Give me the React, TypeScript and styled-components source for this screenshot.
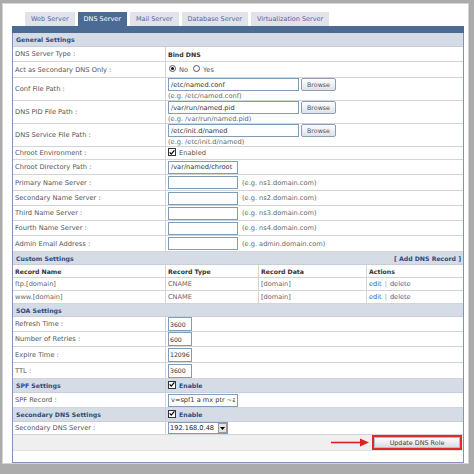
import React from "react";
import styled, { createGlobalStyle } from "styled-components";

const Global = createGlobalStyle`
  html, body { margin: 0; padding: 0; }
  body {
    background: #acacac;
    width: 474px;
    height: 474px;
    overflow: hidden;
    font-family: "DejaVu Sans", Verdana, sans-serif;
    font-size: 6.7px;
    color: #555;
  }
`;

const Frame = styled.div`
  box-sizing: border-box;
  margin: 3px 5px 0 2px;
  height: 461px;
  background: #fff;
  border: 1px solid #d4d4d4;
  padding: 8px 4px 0 9px;
`;

const Tabs = styled.div`
  display: flex;
  gap: 3px;
  padding-left: 13px;
`;

const Tab = styled.div<{ $active?: boolean }>`
  height: 14px;
  line-height: 14px;
  padding: 0 6px;
  font-size: 6.5px;
  background: ${(p) => (p.$active ? "#4b6b95" : "#e0e3e9")};
  color: ${(p) => (p.$active ? "#fff" : "#5b5fa5")};
  white-space: nowrap;
`;

const Bar = styled.div`
  height: 7px;
  background: #4b6b95;
`;

const Panel = styled.div`
  box-sizing: border-box;
  border: 1px solid #8094b5;
  border-top: none;
  height: 430px;
  padding-bottom: 12px;
`;

const SectionHeader = styled.div<{ $h: number }>`
  box-sizing: border-box;
  height: ${(p) => p.$h}px;
  display: flex;
  align-items: center;
  justify-content: space-between;
  padding: 0 2px 0 3px;
  background: #d6dce6;
  border-bottom: 1px solid #c8ced8;
  font-size: 6.2px;
  font-weight: bold;
  color: #2f4b7c;
`;

const Row = styled.div<{ $h: number; $head?: boolean }>`
  box-sizing: border-box;
  height: ${(p) => p.$h}px;
  display: grid;
  grid-template-columns: 153px 1fr;
  border-bottom: 1px solid ${(p) => (p.$head ? "#c8ced8" : "#d4d4d4")};
  background: ${(p) => (p.$head ? "#d6dce6" : "#fff")};
`;

const Label = styled.div<{ $head?: boolean }>`
  display: flex;
  align-items: center;
  padding-left: ${(p) => (p.$head ? "3px" : "2px")};
  border-right: 1px solid ${(p) => (p.$head ? "#c8ced8" : "#d4d4d4")};
  font-size: ${(p) => (p.$head ? "6.2px" : "6.7px")};
  font-weight: ${(p) => (p.$head ? "bold" : "normal")};
  color: ${(p) => (p.$head ? "#2f4b7c" : "#555")};
  white-space: nowrap;
`;

const Value = styled.div<{ $stack?: boolean }>`
  display: flex;
  flex-direction: ${(p) => (p.$stack ? "column" : "row")};
  align-items: ${(p) => (p.$stack ? "flex-start" : "center")};
  justify-content: ${(p) => (p.$stack ? "center" : "flex-start")};
  gap: ${(p) => (p.$stack ? "1px" : "4px")};
  padding-left: 2px;
  white-space: nowrap;
`;

const Line = styled.div`
  display: flex;
  align-items: center;
  gap: 2px;
`;

const Strong = styled.span<{ $blue?: boolean }>`
  font-size: 6.2px;
  font-weight: bold;
  color: ${(p) => (p.$blue ? "#2f4b7c" : "#333")};
`;

const Field = styled.input<{ $w: number; $h?: number; $pad?: number; $fs?: number }>`
  box-sizing: border-box;
  width: ${(p) => p.$w}px;
  height: ${(p) => p.$h ?? 13}px;
  border: 1px solid #7f9db9;
  padding: 0 ${(p) => p.$pad ?? 2}px;
  margin: 0;
  font-family: "DejaVu Sans", Verdana, sans-serif;
  font-size: ${(p) => p.$fs ?? 6.6}px;
  color: #333;
  background: #fff;
  outline: none;
`;

const Browse = styled.button`
  box-sizing: border-box;
  width: 35px;
  height: 13px;
  padding: 0;
  border: 1px solid #8d9db8;
  border-radius: 2px;
  background: linear-gradient(#fdfdfd, #e0e2e6);
  font-family: "DejaVu Sans", Verdana, sans-serif;
  font-size: 6.3px;
  color: #555;
`;

const Hint = styled.span`
  font-size: 6.6px;
  color: #666;
`;

const Option = styled.label`
  display: inline-flex;
  align-items: center;
  gap: 3px;
  color: #555;
`;

const Radio = styled.span<{ $on?: boolean }>`
  box-sizing: border-box;
  width: 7px;
  height: 7px;
  border-radius: 50%;
  border: 1px solid #555;
  background: #fff;
  position: relative;
  margin-top: -2px;
  &::after {
    content: "";
    display: ${(p) => (p.$on ? "block" : "none")};
    position: absolute;
    left: 1px;
    top: 1px;
    width: 3px;
    height: 3px;
    border-radius: 50%;
    background: #111;
  }
`;

const Options = styled.div`
  display: flex;
  align-items: center;
  gap: 5px;
  padding-left: 3px;
`;

const Check = styled.span`
  box-sizing: border-box;
  width: 8px;
  height: 8px;
  border: 1px solid #333;
  background: #fff;
  display: inline-flex;
  align-items: center;
  justify-content: center;
  margin-top: -2px;
`;

const RecordRow = styled.div`
  box-sizing: border-box;
  height: 13px;
  display: grid;
  grid-template-columns: 153px 93px 108px 1fr;
  border-bottom: 1px solid #d4d4d4;
`;

const Cell = styled.div<{ $head?: boolean; $last?: boolean }>`
  display: flex;
  align-items: center;
  padding-left: 2px;
  border-right: ${(p) => (p.$last ? "none" : "1px solid #d4d4d4")};
  font-size: ${(p) => (p.$head ? "6.2px" : "6.6px")};
  font-weight: ${(p) => (p.$head ? "bold" : "normal")};
  color: ${(p) => (p.$head ? "#333" : "#666")};
  white-space: nowrap;
`;

const Link = styled.span`
  color: #3d5f9f;
`;

const Sep = styled.span`
  color: #999;
  margin: 0 3px;
`;

const AddLink = styled.span`
  color: #2f4b7c;
`;

const SelectBox = styled.div`
  box-sizing: border-box;
  width: 60px;
  height: 12px;
  display: flex;
  border: 1px solid #7f9db9;
  background: #fff;
`;

const SelectText = styled.span`
  flex: 1;
  padding-left: 1px;
  font-size: 6.6px;
  line-height: 10px;
  color: #222;
  overflow: hidden;
`;

const SelectArrow = styled.span`
  width: 9px;
  display: flex;
  align-items: center;
  justify-content: center;
  background: #e4e4e4;
  border: 1px solid #999;
  box-sizing: border-box;
`;

const Footer = styled.div`
  box-sizing: border-box;
  height: 16px;
  display: flex;
  justify-content: flex-end;
  align-items: flex-start;
  gap: 3px;
  padding-right: 1px;
  background: #efefef;
  border-bottom: 1px solid #e0e0e0;
`;

const ArrowMark = styled.svg`
  margin-top: 3px;
`;

const Highlight = styled.div`
  box-sizing: border-box;
  width: 90px;
  height: 15px;
  border: 2px solid #e02a2a;
  display: flex;
`;

const UpdateButton = styled.button`
  flex: 1;
  margin: 0;
  padding: 0;
  border: 1px solid #b8bcc4;
  background: linear-gradient(#fbfbfb, #dcdee2);
  font-family: "DejaVu Sans", Verdana, sans-serif;
  font-size: 6.4px;
  color: #444;
`;

const Tick = () => (
  <svg width="7" height="7" viewBox="0 0 7 7">
    <path d="M0.8 3.4 L2.6 5.4 L6.3 0.9" fill="none" stroke="#000" strokeWidth="1.4" />
  </svg>
);

const FileRow = ({ label, value, hint }: { label: string; value: string; hint: string }) => (
  <Row $h={23}>
    <Label>{label}</Label>
    <Value $stack>
      <Line>
        <Field $w={131} defaultValue={value} readOnly />
        <Browse type="button">Browse</Browse>
      </Line>
      <Hint>{hint}</Hint>
    </Value>
  </Row>
);

const NameRow = ({ label, hint, h }: { label: string; hint: string; h: number }) => (
  <Row $h={h}>
    <Label>{label}</Label>
    <Value>
      <Field $w={70} defaultValue="" readOnly />
      <Hint>{hint}</Hint>
    </Value>
  </Row>
);

const SoaRow = ({ label, value, h }: { label: string; value: string; h: number }) => (
  <Row $h={h}>
    <Label>{label}</Label>
    <Value>
      <Field $w={24} $h={14} $pad={1} $fs={6.2} defaultValue={value} readOnly />
    </Value>
  </Row>
);

export default function App() {
  return (
    <>
      <Global />
      <Frame>
        <Tabs>
          <Tab>Web Server</Tab>
          <Tab $active>DNS Server</Tab>
          <Tab>Mail Server</Tab>
          <Tab>Database Server</Tab>
          <Tab>Virtualization Server</Tab>
        </Tabs>
        <Bar />
        <Panel>
          <SectionHeader $h={14}>General Settings</SectionHeader>
          <Row $h={15}>
            <Label>DNS Server Type :</Label>
            <Value>
              <Strong>Bind DNS</Strong>
            </Value>
          </Row>
          <Row $h={16}>
            <Label>Act as Secondary DNS Only :</Label>
            <Options>
              <Option>
                <Radio $on />
                No
              </Option>
              <Option>
                <Radio />
                Yes
              </Option>
            </Options>
          </Row>
          <FileRow label="Conf File Path :" value="/etc/named.conf" hint="(e.g. /etc/named.conf)" />
          <FileRow label="DNS PID File Path :" value="/var/run/named.pid" hint="(e.g. /var/run/named.pid)" />
          <FileRow label="DNS Service File Path :" value="/etc/init.d/named" hint="(e.g. /etc/init.d/named)" />
          <Row $h={13}>
            <Label>Chroot Environment :</Label>
            <Value>
              <Option>
                <Check>
                  <Tick />
                </Check>
                Enabled
              </Option>
            </Value>
          </Row>
          <Row $h={15}>
            <Label>Chroot Directory Path :</Label>
            <Value>
              <Field $w={70} defaultValue="/var/named/chroot" readOnly />
            </Value>
          </Row>
          <NameRow h={16} label="Primary Name Server :" hint="(e.g. ns1.domain.com)" />
          <NameRow h={15} label="Secondary Name Server :" hint="(e.g. ns2.domain.com)" />
          <NameRow h={15} label="Third Name Server :" hint="(e.g. ns3.domain.com)" />
          <NameRow h={15} label="Fourth Name Server :" hint="(e.g. ns4.domain.com)" />
          <NameRow h={16} label="Admin Email Address :" hint="(e.g. admin.domain.com)" />

          <SectionHeader $h={13}>
            <span>Custom Settings</span>
            <AddLink>[ Add DNS Record ]</AddLink>
          </SectionHeader>
          <RecordRow>
            <Cell $head>Record Name</Cell>
            <Cell $head>Record Type</Cell>
            <Cell $head>Record Data</Cell>
            <Cell $head $last>Actions</Cell>
          </RecordRow>
          {["ftp.[domain]", "www.[domain]"].map((name) => (
            <RecordRow key={name}>
              <Cell>{name}</Cell>
              <Cell>CNAME</Cell>
              <Cell>[domain]</Cell>
              <Cell $last>
                <Link>edit</Link>
                <Sep>|</Sep>
                <Link>delete</Link>
              </Cell>
            </RecordRow>
          ))}

          <SectionHeader $h={13}>SOA Settings</SectionHeader>
          <SoaRow h={15} label="Refresh Time :" value="3600" />
          <SoaRow h={15} label="Number of Retries :" value="600" />
          <SoaRow h={16} label="Expire Time :" value="12096" />
          <SoaRow h={16} label="TTL :" value="3600" />

          <Row $h={14} $head>
            <Label $head>SPF Settings</Label>
            <Value>
              <Option>
                <Check>
                  <Tick />
                </Check>
                <Strong $blue>Enable</Strong>
              </Option>
            </Value>
          </Row>
          <Row $h={15}>
            <Label>SPF Record :</Label>
            <Value>
              <Field $w={70} defaultValue="v=spf1 a mx ptr ~all" readOnly />
            </Value>
          </Row>
          <Row $h={14} $head>
            <Label $head>Secondary DNS Settings</Label>
            <Value>
              <Option>
                <Check>
                  <Tick />
                </Check>
                <Strong $blue>Enable</Strong>
              </Option>
            </Value>
          </Row>
          <Row $h={13}>
            <Label>Secondary DNS Server :</Label>
            <Value>
              <SelectBox>
                <SelectText>192.168.0.48</SelectText>
                <SelectArrow>
                  <svg width="5" height="3" viewBox="0 0 5 3">
                    <path d="M0 0 H5 L2.5 3 Z" fill="#000" />
                  </svg>
                </SelectArrow>
              </SelectBox>
            </Value>
          </Row>
          <Footer>
            <ArrowMark width="38" height="9" viewBox="0 0 38 9">
              <line x1="0" y1="4.5" x2="31" y2="4.5" stroke="#e02020" strokeWidth="1.6" />
              <polygon points="29,0.5 38,4.5 29,8.5" fill="#e02020" />
            </ArrowMark>
            <Highlight>
              <UpdateButton type="button">Update DNS Role</UpdateButton>
            </Highlight>
          </Footer>
        </Panel>
      </Frame>
    </>
  );
}
